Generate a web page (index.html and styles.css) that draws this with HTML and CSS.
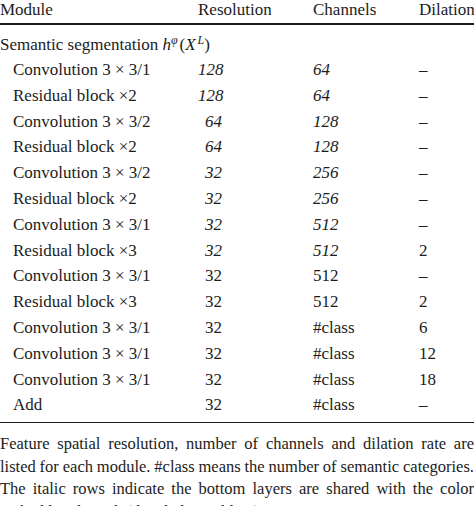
FILE: index.html
```html
<!DOCTYPE html>
<html>
<head>
<meta charset="utf-8">
<link rel="stylesheet" href="styles.css">
</head>
<body>
<div class="page">
  <div class="row head">
    <div class="c1">Module</div>
    <div class="c2">Resolution</div>
    <div class="c3">Channels</div>
    <div class="c4">Dilation</div>
  </div>
  <div class="body">
    <div class="row section">
      <div class="c1">Semantic segmentation <i>h</i><sup class="sup"><i>φ</i></sup>(<i>X</i><sup class="sup sup-l"><i>L</i></sup>)</div>
    </div>
    <div class="row it">
      <div class="c1 ind">Convolution 3 × 3/1</div>
      <div class="c2"><span class="num">128</span></div>
      <div class="c3">64</div>
      <div class="c4 up">–</div>
    </div>
    <div class="row it">
      <div class="c1 ind">Residual block ×2</div>
      <div class="c2"><span class="num">128</span></div>
      <div class="c3">64</div>
      <div class="c4 up">–</div>
    </div>
    <div class="row it">
      <div class="c1 ind">Convolution 3 × 3/2</div>
      <div class="c2"><span class="num">64</span></div>
      <div class="c3">128</div>
      <div class="c4 up">–</div>
    </div>
    <div class="row it">
      <div class="c1 ind">Residual block ×2</div>
      <div class="c2"><span class="num">64</span></div>
      <div class="c3">128</div>
      <div class="c4 up">–</div>
    </div>
    <div class="row it">
      <div class="c1 ind">Convolution 3 × 3/2</div>
      <div class="c2"><span class="num">32</span></div>
      <div class="c3">256</div>
      <div class="c4 up">–</div>
    </div>
    <div class="row it">
      <div class="c1 ind">Residual block ×2</div>
      <div class="c2"><span class="num">32</span></div>
      <div class="c3">256</div>
      <div class="c4 up">–</div>
    </div>
    <div class="row it">
      <div class="c1 ind">Convolution 3 × 3/1</div>
      <div class="c2"><span class="num">32</span></div>
      <div class="c3">512</div>
      <div class="c4 up">–</div>
    </div>
    <div class="row it">
      <div class="c1 ind">Residual block ×3</div>
      <div class="c2"><span class="num">32</span></div>
      <div class="c3">512</div>
      <div class="c4 up">2</div>
    </div>
    <div class="row">
      <div class="c1 ind">Convolution 3 × 3/1</div>
      <div class="c2"><span class="num">32</span></div>
      <div class="c3">512</div>
      <div class="c4">–</div>
    </div>
    <div class="row">
      <div class="c1 ind">Residual block ×3</div>
      <div class="c2"><span class="num">32</span></div>
      <div class="c3">512</div>
      <div class="c4">2</div>
    </div>
    <div class="row">
      <div class="c1 ind">Convolution 3 × 3/1</div>
      <div class="c2"><span class="num">32</span></div>
      <div class="c3">#class</div>
      <div class="c4">6</div>
    </div>
    <div class="row">
      <div class="c1 ind">Convolution 3 × 3/1</div>
      <div class="c2"><span class="num">32</span></div>
      <div class="c3">#class</div>
      <div class="c4">12</div>
    </div>
    <div class="row">
      <div class="c1 ind">Convolution 3 × 3/1</div>
      <div class="c2"><span class="num">32</span></div>
      <div class="c3">#class</div>
      <div class="c4">18</div>
    </div>
    <div class="row">
      <div class="c1 ind">Add</div>
      <div class="c2"><span class="num">32</span></div>
      <div class="c3">#class</div>
      <div class="c4">–</div>
    </div>
  </div>
  <p class="caption">
    <span class="line">Feature spatial resolution, number of channels and dilation rate are</span>
    <span class="line tight">listed for each module. #class means the number of semantic categories.</span>
    <span class="line">The italic rows indicate the bottom layers are shared with the color</span>
    <span class="line last">embedding branch (detailed in Table <span class="ref">1</span>)</span>
  </p>
</div>
</body>
</html>
```
FILE: styles.css
```css
html, body {
  margin: 0;
  padding: 0;
  background: #ffffff;
  overflow: hidden;
}
.page {
  width: 480px;
  font-family: "Liberation Serif", "Times New Roman", serif;
  font-size: 17px;
  color: #1c1c1c;
}
.row {
  display: grid;
  grid-template-columns: 198px 115px 106px 1fr;
  height: 25.8px;
  line-height: 25.8px;
  white-space: nowrap;
}
.head {
  height: 23px;
  line-height: 20px;
  border-bottom: 2.5px solid #1c1c1c;
}
.body {
  padding-top: 7px;
  padding-bottom: 4px;
  border-bottom: 1px solid #1c1c1c;
}
.section {
  height: 25px;
}
.ind {
  padding-left: 13px;
}
.it .c2, .it .c3 {
  font-style: italic;
}
.num {
  display: inline-block;
  width: 24px;
  text-align: right;
}
.sup {
  font-size: 12px;
  line-height: 0;
  vertical-align: 6px;
  margin-right: 2px;
}
.sup-l {
  margin-left: 2px;
  margin-right: 0;
}
.caption {
  width: 474px;
  margin: 10px 0 0 0;
  font-size: 16.5px;
  line-height: 22.5px;
}
.line {
  display: block;
  white-space: nowrap;
  text-align: justify;
  text-align-last: justify;
}
.tight {
  word-spacing: -1px;
}
.last {
  text-align: left;
  text-align-last: left;
}
.ref {
  color: #2f3fd0;
}
```
